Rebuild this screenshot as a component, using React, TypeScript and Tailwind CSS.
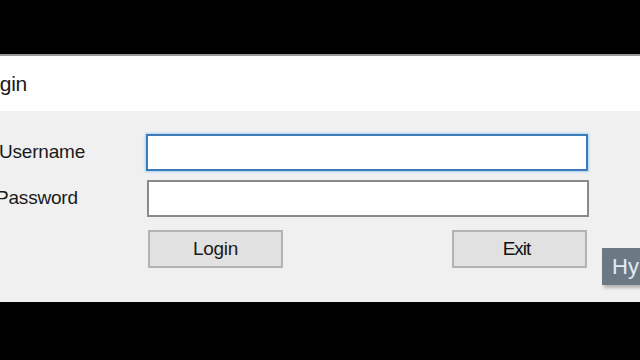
export default function App() {
  return (
    <div className="w-[640px] h-[360px] bg-black flex flex-col overflow-hidden relative" style={{ fontFamily: '"Liberation Sans", Arial, sans-serif' }}>
      <div className="h-[54px] shrink-0 bg-black" />
      <div className="h-[2px] shrink-0 bg-[#9a9a9a]" />
      <div className="h-[55px] shrink-0 bg-white flex items-center">
        <span className="ml-[-23px] text-[21px] text-[#1a1a1a] tracking-[-0.3px]">Login</span>
      </div>
      <div className="h-[191px] shrink-0 bg-[#f0f0f0] relative">
        <div className="flex flex-col pt-[23px]">
          <div className="flex items-center h-[37px]">
            <div className="w-[147px] text-[19px] text-[#1a1a1a] tracking-[-0.2px] ml-[-1px]">Username</div>
            <div className="w-[442px] h-[37px] bg-white border-2 border-[#3d7bb8] shadow-[0_0_2px_1px_#aad4f5]" />
          </div>
          <div className="flex items-center h-[37px] mt-[9px]">
            <div className="w-[147px] text-[19px] text-[#1a1a1a] tracking-[-0.2px] ml-[-4px]">Password</div>
            <div className="w-[442px] h-[37px] bg-white border-2 border-[#8a8a8a] ml-[4px]" />
          </div>
          <div className="flex mt-[13px] h-[38px]">
            <div className="w-[148px]" />
            <div className="w-[135px] h-[38px] bg-[#e1e1e1] border-2 border-[#b3b3b3] flex items-center justify-center text-[19px] text-[#1a1a1a] tracking-[-0.3px]">Login</div>
            <div className="w-[169px]" />
            <div className="w-[135px] h-[38px] bg-[#e1e1e1] border-2 border-[#b3b3b3] flex items-center justify-center text-[19px] text-[#111] tracking-[-1px] pr-[6px]">Exit</div>
          </div>
        </div>
        <div className="absolute left-[602px] top-[137px] w-[50px] h-[37px] bg-[#6b7985] shadow-[2px_3px_3px_rgba(0,0,0,0.25)] flex items-center pl-[10px] text-[22px] text-[#e2ecf6]">Hy</div>
      </div>
      <div className="flex-1 bg-black" />
    </div>
  );
}
